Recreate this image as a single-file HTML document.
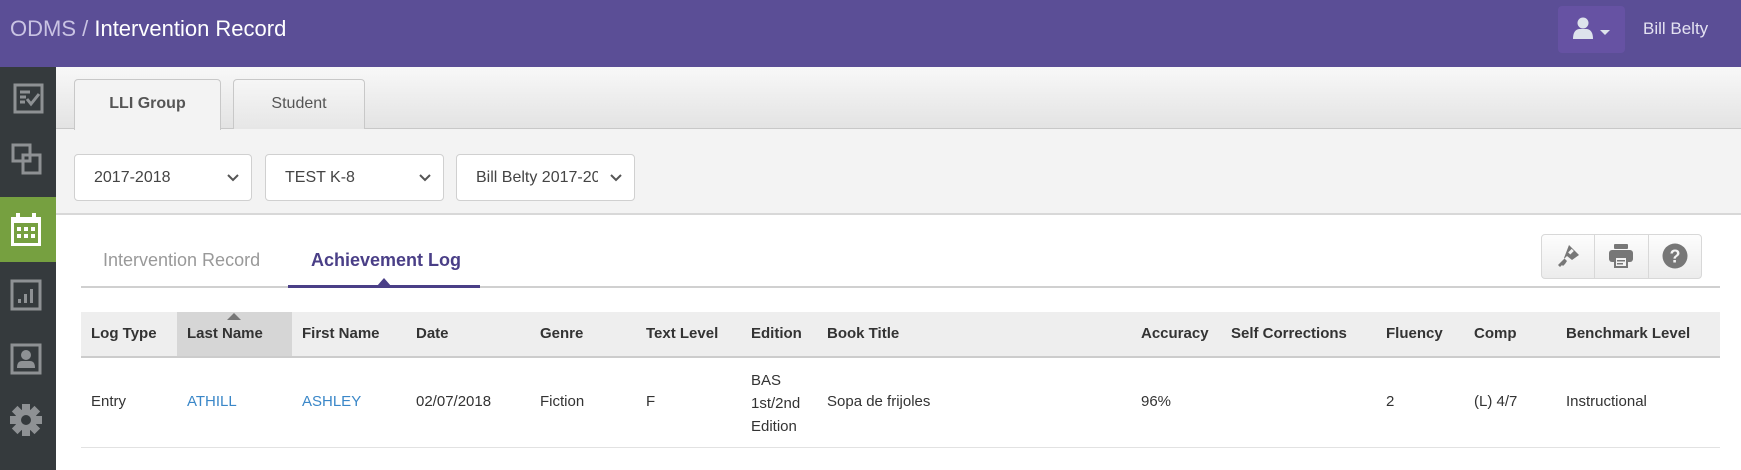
<!DOCTYPE html>
<html><head><meta charset="utf-8"><style>
*{margin:0;padding:0;box-sizing:border-box}
body{width:1741px;height:470px;overflow:hidden;background:#fff;font-family:"Liberation Sans",sans-serif;position:relative;color:#333}
.a{position:absolute;white-space:nowrap}
#hdr{left:0;top:0;width:1741px;height:67px;background:#5b4e96}
#side{left:0;top:67px;width:56px;height:403px;background:#353a3d}
#tabbar{left:56px;top:67px;width:1685px;height:62px;background:linear-gradient(#f8f8f8,#e3e3e3);border-bottom:1px solid #c8c8c8}
#gray{left:56px;top:129px;width:1685px;height:86px;background:#f3f3f3;border-bottom:2px solid #d8d8d8}
.tab{top:79px;height:50px;border:1px solid #c8c8c8;border-bottom:none;border-radius:4px 4px 0 0;font-size:16px;text-align:center;line-height:48px;color:#555}
.sel{top:154px;height:47px;background:#fff;border:1px solid #d0d0d0;border-radius:4px;font-size:16px;line-height:45px;padding-left:19px;color:#444;overflow:hidden}
.sel svg{position:absolute;right:12px;top:19px}
.th{top:312px;height:44px;line-height:44px;font-size:15px;font-weight:bold;color:#333}
.td{top:392px;font-size:15px;color:#333;line-height:20px}
.lk{color:#3a87c8}
</style></head><body>
<div class="a" id="hdr"></div>
<div class="a" style="left:10px;top:14px;font-size:22px;color:#fff;line-height:30px"><span style="color:#c9c3e3">ODMS /</span> Intervention Record</div>
<div class="a" style="left:1558px;top:6px;width:67px;height:47px;background:#6652a3;border-radius:4px"></div>
<svg class="a" style="left:1573px;top:17px" width="40" height="22" viewBox="0 0 40 22"><circle cx="10" cy="6" r="5.5" fill="#dde3ec"/><path d="M0 22 Q0 13 6 12 L14 12 Q20 13 20 22Z" fill="#dde3ec"/><path d="M27 13 L37 13 L32 18Z" fill="#dde3ec"/></svg>
<div class="a" style="left:1643px;top:18px;font-size:17px;color:#e4e2f2;line-height:22px">Bill Belty</div>

<div class="a" id="side"></div>
<div class="a" style="left:0;top:197px;width:56px;height:65px;background:#76a040"></div>
<svg class="a" style="left:13px;top:83px" width="31" height="31" viewBox="0 0 31 31"><path d="M2 2H29V29H2Z" fill="none" stroke="#8e9194" stroke-width="3"/><path d="M7 9H17M7 14H13M7 19H12" stroke="#8e9194" stroke-width="3"/><path d="M14 16 L18 21 L26 11" fill="none" stroke="#8e9194" stroke-width="3"/></svg>
<svg class="a" style="left:11px;top:143px" width="32" height="33" viewBox="0 0 32 33"><path d="M2 2H19V18H2Z" fill="none" stroke="#8e9194" stroke-width="3"/><path d="M12 12H29V30H12Z" fill="none" stroke="#8e9194" stroke-width="3"/></svg>
<svg class="a" style="left:10px;top:213px" width="32" height="33" viewBox="0 0 32 33"><path d="M1 4H31V33H1Z" fill="#fff"/><rect x="4" y="10" width="24" height="20" fill="#76a040"/><rect x="6" y="0" width="4" height="6" fill="#fff"/><rect x="22" y="0" width="4" height="6" fill="#fff"/><rect x="13" y="1" width="6" height="3" fill="#76a040"/><g fill="#fff"><rect x="7" y="14" width="4" height="4"/><rect x="14" y="14" width="4" height="4"/><rect x="21" y="14" width="4" height="4"/><rect x="7" y="21" width="4" height="4"/><rect x="14" y="21" width="4" height="4"/><rect x="21" y="21" width="4" height="4"/></g></svg>
<svg class="a" style="left:10px;top:279px" width="32" height="32" viewBox="0 0 32 32"><path d="M2 2H30V30H2Z" fill="none" stroke="#8e9194" stroke-width="3"/><rect x="8" y="20" width="3" height="4" fill="#8e9194"/><rect x="14" y="15" width="3" height="9" fill="#8e9194"/><rect x="20" y="10" width="3" height="14" fill="#8e9194"/></svg>
<svg class="a" style="left:10px;top:343px" width="32" height="32" viewBox="0 0 32 32"><path d="M2 2H30V30H2Z" fill="none" stroke="#8e9194" stroke-width="3"/><circle cx="16" cy="12" r="5" fill="#8e9194"/><path d="M7 25 Q7 18 12 18 L20 18 Q25 18 25 25Z" fill="#8e9194"/></svg>
<svg class="a" style="left:10px;top:404px" width="32" height="32" viewBox="0 0 32 32"><g fill="#8e9194"><circle cx="16" cy="16" r="11"/><rect x="12" y="0" width="8" height="32"/><rect x="0" y="12" width="32" height="8"/><rect x="12" y="0" width="8" height="32" transform="rotate(45 16 16)"/><rect x="12" y="0" width="8" height="32" transform="rotate(-45 16 16)"/></g><circle cx="16" cy="16" r="5" fill="#353a3d"/></svg>

<div class="a" id="tabbar"></div>
<div class="a" id="gray"></div>
<div class="a tab" style="left:74px;width:147px;background:#f3f3f3;height:51px;font-weight:bold">LLI Group</div>
<div class="a tab" style="left:233px;width:132px;background:linear-gradient(#f6f6f6,#e6e6e6)">Student</div>

<div class="a sel" style="left:74px;width:178px">2017-2018<svg width="12" height="8" viewBox="0 0 12 8"><path d="M1 1L6 6L11 1" fill="none" stroke="#555" stroke-width="2"/></svg></div>
<div class="a sel" style="left:265px;width:179px">TEST K-8<svg width="12" height="8" viewBox="0 0 12 8"><path d="M1 1L6 6L11 1" fill="none" stroke="#555" stroke-width="2"/></svg></div>
<div class="a sel" style="left:456px;width:179px"><span style="display:inline-block;width:122px;overflow:hidden;vertical-align:top">Bill Belty 2017-2018</span><svg width="12" height="8" viewBox="0 0 12 8"><path d="M1 1L6 6L11 1" fill="none" stroke="#555" stroke-width="2"/></svg></div>

<div class="a" style="left:103px;top:248px;font-size:18px;color:#999;line-height:24px">Intervention Record</div>
<div class="a" style="left:311px;top:248px;font-size:18px;color:#4a3f87;font-weight:bold;line-height:24px">Achievement Log</div>
<div class="a" style="left:81px;top:286px;width:1639px;height:2px;background:#d0d0d0"></div>
<div class="a" style="left:288px;top:285px;width:192px;height:3px;background:#4a3f87"></div>
<svg class="a" style="left:377px;top:278px" width="14" height="8" viewBox="0 0 14 8"><path d="M0 8L7 0L14 8Z" fill="#4a3f87"/></svg>

<div class="a" style="left:1541px;top:234px;width:161px;height:45px;border:1px solid #d8d8d8;border-radius:4px;background:linear-gradient(#fdfdfd,#ececec)"></div>
<div class="a" style="left:1594px;top:235px;width:1px;height:43px;background:#d8d8d8"></div>
<div class="a" style="left:1648px;top:235px;width:1px;height:43px;background:#d8d8d8"></div>
<svg class="a" style="left:1555px;top:243px" width="26" height="26" viewBox="0 0 26 26"><path d="M14 2 L24 12 L17 17 L12 13 L3 22 L5 24 L7 22 L8 23 L10 21 L12 18 L9 15Z" fill="#777"/><rect x="15" y="6" width="3" height="5" fill="#f3f3f3" transform="rotate(45 16 8)"/></svg>
<svg class="a" style="left:1608px;top:243px" width="26" height="26" viewBox="0 0 26 26"><rect x="6" y="1" width="14" height="5" rx="1" fill="#777"/><rect x="1" y="7" width="24" height="12" rx="3" fill="#777"/><rect x="6" y="14" width="14" height="11" fill="#777"/><rect x="8" y="15" width="10" height="8" fill="#f3f3f3"/><rect x="9" y="17" width="8" height="1.5" fill="#777"/><rect x="9" y="20" width="6" height="1.5" fill="#777"/></svg>
<svg class="a" style="left:1662px;top:243px" width="26" height="26" viewBox="0 0 26 26"><circle cx="13" cy="13" r="12.5" fill="#777"/><text x="13" y="19.5" font-family="Liberation Sans" font-weight="bold" font-size="18" fill="#f3f3f3" text-anchor="middle">?</text></svg>

<div class="a" style="left:81px;top:312px;width:1639px;height:44px;background:#eee"></div>
<div class="a" style="left:177px;top:312px;width:115px;height:44px;background:#d6d6d6"></div>
<svg class="a" style="left:227px;top:313px" width="14" height="7" viewBox="0 0 14 7"><path d="M0 7L7 0L14 7Z" fill="#777"/></svg>
<div class="a" style="left:81px;top:356px;width:1639px;height:2px;background:#ccc"></div>
<div class="a" style="left:81px;top:447px;width:1639px;height:1px;background:#e2e2e2"></div>

<div class="a th" style="left:91px">Log Type</div>
<div class="a th" style="left:187px">Last Name</div>
<div class="a th" style="left:302px">First Name</div>
<div class="a th" style="left:416px">Date</div>
<div class="a th" style="left:540px">Genre</div>
<div class="a th" style="left:646px">Text Level</div>
<div class="a th" style="left:751px">Edition</div>
<div class="a th" style="left:827px">Book Title</div>
<div class="a th" style="left:1141px">Accuracy</div>
<div class="a th" style="left:1231px">Self Corrections</div>
<div class="a th" style="left:1386px">Fluency</div>
<div class="a th" style="left:1474px">Comp</div>
<div class="a th" style="left:1566px">Benchmark Level</div>

<div class="a td" style="left:91px">Entry</div>
<div class="a td lk" style="left:187px">ATHILL</div>
<div class="a td lk" style="left:302px">ASHLEY</div>
<div class="a td" style="left:416px">02/07/2018</div>
<div class="a td" style="left:540px">Fiction</div>
<div class="a td" style="left:646px">F</div>
<div class="a td" style="left:751px;top:369px;line-height:23px">BAS<br>1st/2nd<br>Edition</div>
<div class="a td" style="left:827px">Sopa de frijoles</div>
<div class="a td" style="left:1141px">96%</div>
<div class="a td" style="left:1386px">2</div>
<div class="a td" style="left:1474px">(L) 4/7</div>
<div class="a td" style="left:1566px">Instructional</div>
</body></html>
